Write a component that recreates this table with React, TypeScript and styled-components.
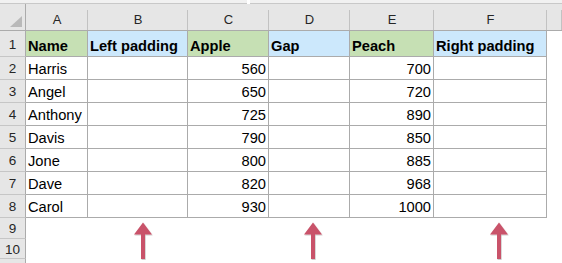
import React from "react";
import styled, { createGlobalStyle, css } from "styled-components";

const GlobalStyle = createGlobalStyle`
  html, body { margin: 0; padding: 0; background: #ffffff; }
  body { font-family: "Liberation Sans", Arial, sans-serif; }
`;

const Sheet = styled.div`
  position: relative;
  width: 562px;
  height: 263px;
  overflow: hidden;
  background: #ffffff;
`;

const TopBar = styled.div`
  display: flex;
  gap: 3px;
  height: 4px;
  background: #ffffff;
`;

const TopSegment = styled.div<{ $w?: number }>`
  flex: ${(p) => (p.$w ? `0 0 ${p.$w}px` : "1 1 auto")};
  height: 3px;
  background: #f1f1f1;
  border-bottom: 1px solid #c8c8c8;
`;

const Grid = styled.div`
  display: grid;
  grid-template-columns: 26px 62px 100px 81px 81px 84px 113px 1fr;
  grid-template-rows: 27px 26px repeat(7, 23px) 21px 20px 20px;
`;

const Corner = styled.div`
  box-sizing: border-box;
  background: #e6e6e6;
  border-right: 1px solid #ababab;
  border-bottom: 1px solid #ababab;
  display: flex;
  align-items: flex-end;
  justify-content: flex-end;
  padding: 0 3px 3px 0;
`;

const ColHead = styled.div`
  box-sizing: border-box;
  background: linear-gradient(#c2c2c2, #c2c2c2) right bottom / 1px 20px no-repeat, #e6e6e6;
  border-bottom: 1px solid #ababab;
  display: flex;
  align-items: flex-end;
  justify-content: center;
  padding-bottom: 3px;
  font-size: 13px;
  color: #262626;
`;

const RowHead = styled.div`
  box-sizing: border-box;
  background: #e6e6e6;
  border-right: 1px solid #ababab;
  border-bottom: 1px solid #c6c6c6;
  display: flex;
  align-items: center;
  justify-content: center;
  font-size: 13.5px;
  color: #262626;
  padding-top: 1px;
`;

type Tone = "green" | "blue" | "none";

const Cell = styled.div<{ $tone?: Tone; $right?: boolean; $bold?: boolean }>`
  box-sizing: border-box;
  border-right: 1px solid #ababab;
  border-bottom: 1px solid #ababab;
  background: ${(p) =>
    p.$tone === "green" ? "#c6e0b4" : p.$tone === "blue" ? "#cce8fc" : "#ffffff"};
  display: flex;
  align-items: flex-end;
  justify-content: ${(p) => (p.$right ? "flex-end" : "flex-start")};
  padding: 0 2px 1px 2px;
  font-size: 14.67px;
  line-height: 18px;
  color: #000000;
  white-space: nowrap;
  overflow: hidden;
  ${(p) =>
    p.$bold &&
    css`
      font-weight: bold;
    `}
`;

const Blank = styled.div`
  background: #ffffff;
`;

const ArrowWrap = styled.div<{ $left: number }>`
  position: absolute;
  top: 222px;
  left: ${(p) => p.$left}px;
  width: 20px;
  height: 39px;
`;

const Arrow: React.FC<{ left: number }> = ({ left }) => (
  <ArrowWrap $left={left}>
    <svg width="20" height="39" viewBox="0 0 20 39">
      <defs>
        <filter id={`sh${left}`} x="-30%" y="-10%" width="160%" height="130%">
          <feDropShadow dx="0.6" dy="0.8" stdDeviation="0.6" floodColor="#000" floodOpacity="0.25" />
        </filter>
      </defs>
      <g filter={`url(#sh${left})`} fill="#c9526a">
        <polygon points="10,0.5 19,12.5 1,12.5" />
        <rect x="8" y="12" width="4" height="25" />
      </g>
    </svg>
  </ArrowWrap>
);

const cols = ["A", "B", "C", "D", "E", "F"];

const headers: { label: string; tone: Tone }[] = [
  { label: "Name", tone: "green" },
  { label: "Left padding", tone: "blue" },
  { label: "Apple", tone: "green" },
  { label: "Gap", tone: "blue" },
  { label: "Peach", tone: "green" },
  { label: "Right padding", tone: "blue" },
];

const rows: [string, number, number][] = [
  ["Harris", 560, 700],
  ["Angel", 650, 720],
  ["Anthony", 725, 890],
  ["Davis", 790, 850],
  ["Jone", 800, 885],
  ["Dave", 820, 968],
  ["Carol", 930, 1000],
];

export default function App() {
  return (
    <>
      <GlobalStyle />
      <Sheet>
        <TopBar>
          <TopSegment $w={247} />
          <TopSegment />
        </TopBar>
        <Grid>
          <Corner>
            <svg width="12" height="11" viewBox="0 0 12 11">
              <polygon points="12,0 12,11 0,11" fill="#b9b9b9" />
            </svg>
          </Corner>
          {cols.map((c) => (
            <ColHead key={c}>{c}</ColHead>
          ))}
          <ColHead />

          <RowHead>1</RowHead>
          {headers.map((h) => (
            <Cell key={h.label} $tone={h.tone} $bold>
              {h.label}
            </Cell>
          ))}
          <Blank />

          {rows.map(([name, apple, peach], i) => (
            <React.Fragment key={name}>
              <RowHead>{i + 2}</RowHead>
              <Cell>{name}</Cell>
              <Cell />
              <Cell $right>{apple}</Cell>
              <Cell />
              <Cell $right>{peach}</Cell>
              <Cell />
              <Blank />
            </React.Fragment>
          ))}

          {[9, 10, 11].map((n) => (
            <React.Fragment key={n}>
              <RowHead>{n === 11 ? "" : n}</RowHead>
              {cols.map((c) => (
                <Blank key={c} />
              ))}
              <Blank />
            </React.Fragment>
          ))}
        </Grid>
        <Arrow left={133} />
        <Arrow left={303} />
        <Arrow left={489} />
      </Sheet>
    </>
  );
}
